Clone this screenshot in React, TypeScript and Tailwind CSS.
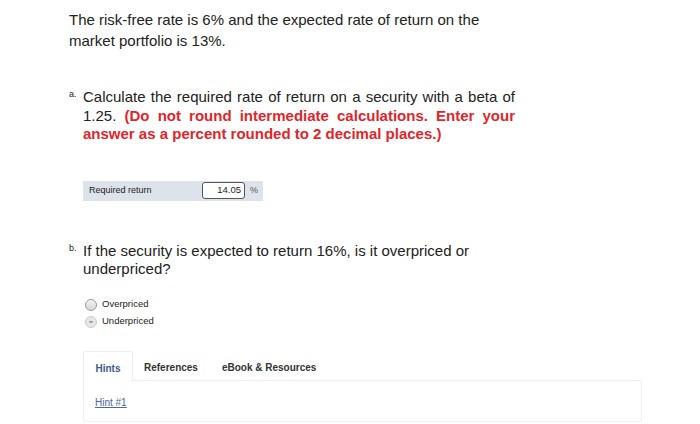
export default function App() {
  return (
    <div className="w-[700px] h-[424px] bg-white overflow-hidden text-[#222]" style={{ fontFamily: '"Liberation Sans", Arial, sans-serif' }}>
      <div className="pl-[69px] pt-[9px]">
        <p className="text-[15px] leading-[21px] w-[440px]">
          The risk-free rate is 6% and the expected rate of return on the market portfolio is 13%.
        </p>

        <div className="mt-[37px] flex">
          <span className="text-[9px] w-[14px] leading-[18px] -mt-[3px]">a.</span>
          <p className="text-[15px] leading-[18.5px] w-[432px] text-justify">
            Calculate the required rate of return on a security with a beta of 1.25.{' '}
            <b className="text-[#de262b]">(Do not round intermediate calculations. Enter your answer as a percent rounded to 2 decimal places.)</b>
          </p>
        </div>

        <div className="ml-[14px] mt-[37px] w-[180px] h-[20px] bg-[#dde3ea] flex items-center text-[9px]">
          <span className="pl-[6px] w-[119px]">Required return</span>
          <div className="w-[43px] h-[17px] bg-white border border-[#555] rounded-[3px] flex items-center justify-end pr-[3px] text-[9.5px]">14.05</div>
          <span className="pl-[5px] text-[#555]">%</span>
        </div>

        <div className="mt-[41px] flex">
          <span className="text-[9px] w-[14px] leading-[18px] -mt-[3px]">b.</span>
          <p className="text-[15px] leading-[18.5px] w-[440px]">
            If the security is expected to return 16%, is it overpriced or underpriced?
          </p>
        </div>

        <div className="ml-[16px] mt-[20px] flex flex-col gap-[5px] text-[9.5px]">
          <label className="flex items-center gap-[5px] h-[12px]">
            <span className="w-[12px] h-[12px] rounded-full border border-[#999] bg-gradient-to-b from-[#f4f4f4] to-[#d6d6d6]" />
            Overpriced
          </label>
          <label className="flex items-center gap-[5px] h-[12px]">
            <span className="w-[12px] h-[12px] rounded-full border border-[#ccc] bg-[#e6e6e6] flex items-center justify-center">
              <span className="w-[4px] h-[2px] rounded-b-full bg-[#999]" />
            </span>
            Underpriced
          </label>
        </div>

        <div className="ml-[14px] mt-[23px] w-[559px]">
          <div className="flex text-[10px] font-bold h-[30px]">
            <div className="w-[50px] border border-b-0 border-[#eee] rounded-t-[3px] flex items-center justify-center pt-[4px] text-[#3f5a86] bg-white">Hints</div>
            <div className="px-[11px] flex items-center pt-[4px] text-[#333]">References</div>
            <div className="px-[13px] flex items-center pt-[4px] text-[#333]">eBook &amp; Resources</div>
          </div>
          <div className="h-[42px] border border-[#eee] rounded-b-[3px] rounded-tr-[3px] -mt-px pl-[11px] pt-[14px] text-[10px]">
            <a className="text-[#4c6a99] underline">Hint #1</a>
          </div>
        </div>
      </div>
    </div>
  );
}
